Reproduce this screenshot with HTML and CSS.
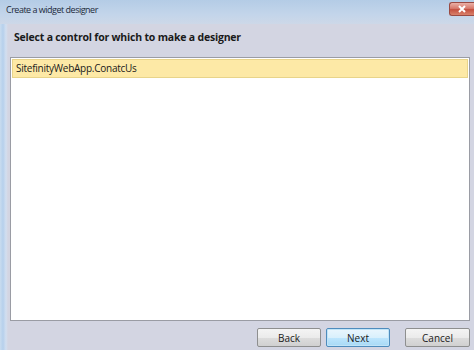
FILE: index.html
```html
<!DOCTYPE html>
<html lang="en">
<head>
    <meta charset="UTF-8">
    <title>Create a widget designer</title>
    <link rel="stylesheet" href="styles.css">
</head>
<body>
    <div class="window">
        <div class="titlebar">
            <span class="title">Create a widget designer</span>
            <button class="close-button" title="Close">
                <svg class="close-icon" viewBox="0 0 10 8">
                    <path d="M2 1 8 7M8 1 2 7"></path>
                </svg>
            </button>
        </div>

        <div class="frame">
            <div class="content">
                <h1 class="heading">Select a control for which to make a designer</h1>

                <div class="listbox">
                    <div class="list-item selected">SitefinityWebApp.ConatcUs</div>
                </div>

                <div class="buttons">
                    <button class="button">Back</button>
                    <button class="button default">Next</button>
                    <button class="button cancel">Cancel</button>
                </div>
            </div>
        </div>
    </div>
</body>
</html>
```

FILE: styles.css
```css
* {
    margin: 0;
    padding: 0;
    box-sizing: border-box;
}

body {
    width: 474px;
    height: 350px;
    overflow: hidden;
    font-family: "Open Sans", "Liberation Sans", sans-serif;
    background: #d3d5e2;
}

.window {
    height: 350px;
    display: flex;
    flex-direction: column;
}

.titlebar {
    height: 24px;
    display: flex;
    justify-content: space-between;
    align-items: flex-start;
    background: linear-gradient(to bottom, #b4cce6, #c3d5ea 60%, #cdd8e8);
}

.title {
    font-size: 9px;
    color: #1d2a3a;
    padding: 3px 0 0 6px;
    letter-spacing: -0.5px;
}

.close-button {
    width: 25px;
    height: 14px;
    margin-top: 2px;
    border: 1px solid #9a4a42;
    border-right: none;
    border-radius: 3px 0 0 3px;
    background: linear-gradient(to bottom, #eab0a6, #d77a6c 45%, #c4503f 55%, #d9826c);
    display: flex;
    align-items: center;
    justify-content: center;
}

.close-icon {
    width: 10px;
    height: 8px;
    stroke: #ffffff;
    stroke-width: 2;
    fill: none;
}

.frame {
    flex: 1;
    display: flex;
    background: linear-gradient(to right, #c9dcef, #b6d0ec 3px, #d2dff0 6px, #d3d5e2 8px);
    padding-left: 8px;
}

.content {
    flex: 1;
    display: flex;
    flex-direction: column;
    padding: 0 4px 0 2px;
    background: #d3d5e2;
}

.heading {
    font-size: 10.5px;
    font-weight: 700;
    color: #1a1a1a;
    padding: 6px 0 0 4px;
    height: 33px;
    letter-spacing: -0.2px;
}

.listbox {
    height: 264px;
    background: #ffffff;
    border: 1px solid #9a9ca4;
    padding: 1px;
}

.list-item {
    height: 19px;
    font-size: 10px;
    line-height: 17px;
    padding-left: 3px;
    color: #1a1a1a;
    letter-spacing: -0.25px;
    border: 1px solid transparent;
}

.list-item.selected {
    background: #fde9a6;
    border-color: #e8d48a;
}

.buttons {
    display: flex;
    justify-content: flex-end;
    padding: 7px 0 0;
    gap: 5px;
}

.button {
    width: 64px;
    height: 19px;
    font-family: "Open Sans", "Liberation Sans", sans-serif;
    font-size: 10px;
    color: #1a1a1a;
    border: 1px solid #8e8f8f;
    border-radius: 2px;
    background: linear-gradient(to bottom, #f4f4f4, #ebebeb 50%, #dddddd 51%, #d0d0d0);
}

.button.default {
    border-color: #4e8cbd;
    background: linear-gradient(to bottom, #eaf6fd, #d9f0fc 50%, #bee6fd 51%, #a7d9f5);
    box-shadow: inset 0 0 0 1px #c0e4f8;
}

.button.cancel {
    width: 65px;
    margin-left: 10px;
}
```
